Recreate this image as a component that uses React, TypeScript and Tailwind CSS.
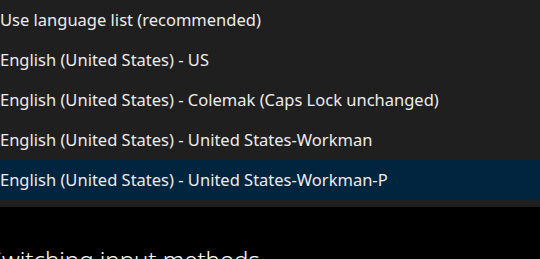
const options = [
  "Use language list (recommended)",
  "English (United States) - US",
  "English (United States) - Colemak (Caps Lock unchanged)",
  "English (United States) - United States-Workman",
  "English (United States) - United States-Workman-P",
];

export default function App() {
  const selected = 4;
  return (
    <div
      className="h-[259px] w-[540px] overflow-hidden bg-black text-[16.5px] text-[#ececec]"
      style={{ fontFamily: '"Noto Sans", "Open Sans", sans-serif' }}
    >
      <div className="bg-[#1f1f1f] pb-[7px]">
        {options.map((label, i) => (
          <div
            key={label}
            className={
              "flex h-10 items-center whitespace-nowrap " +
              (i === selected ? "bg-[#01243f]" : "")
            }
          >
            {label}
          </div>
        ))}
      </div>
      <h2 className="-ml-[11px] mt-[41px] whitespace-nowrap text-[24px] font-light leading-none text-white">
        Switching input methods
      </h2>
    </div>
  );
}
